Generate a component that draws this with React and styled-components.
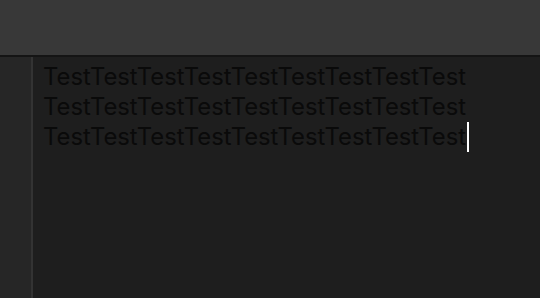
import React from "react";
import styled, { createGlobalStyle } from "styled-components";

const Global = createGlobalStyle`
  html, body { margin: 0; padding: 0; background: #1e1e1e; }
  #root { width: 540px; height: 298px; overflow: hidden; }
`;

const Window = styled.div`
  width: 540px;
  height: 298px;
  display: flex;
  flex-direction: column;
  font-family: Inter, "Liberation Sans", Arial, sans-serif;
`;

const TitleBar = styled.div`
  height: 55px;
  flex: none;
  background: #383838;
  border-bottom: 2px solid #141414;
`;

const Body = styled.div`
  flex: 1;
  display: flex;
  min-height: 0;
`;

const Gutter = styled.div`
  width: 31px;
  flex: none;
  background: #262626;
  border-right: 2px solid #333333;
`;

const Editor = styled.div`
  flex: 1;
  background: #1e1e1e;
  padding: 5px 0 0 10px;
  font-size: 23.8px;
  line-height: 30px;
  color: #0a0a0a;
`;

const Line = styled.div`
  white-space: nowrap;
  height: 30px;
  display: flex;
  align-items: stretch;
`;

const Caret = styled.span`
  display: inline-block;
  width: 2px;
  height: 30px;
  margin-left: 1px;
  background: #ffffff;
`;

export default function App() {
  const text = "Test".repeat(9);
  return (
    <>
      <Global />
      <Window>
        <TitleBar />
        <Body>
          <Gutter />
          <Editor>
            <Line>{text}</Line>
            <Line>{text}</Line>
            <Line>
              {text}
              <Caret />
            </Line>
          </Editor>
        </Body>
      </Window>
    </>
  );
}
